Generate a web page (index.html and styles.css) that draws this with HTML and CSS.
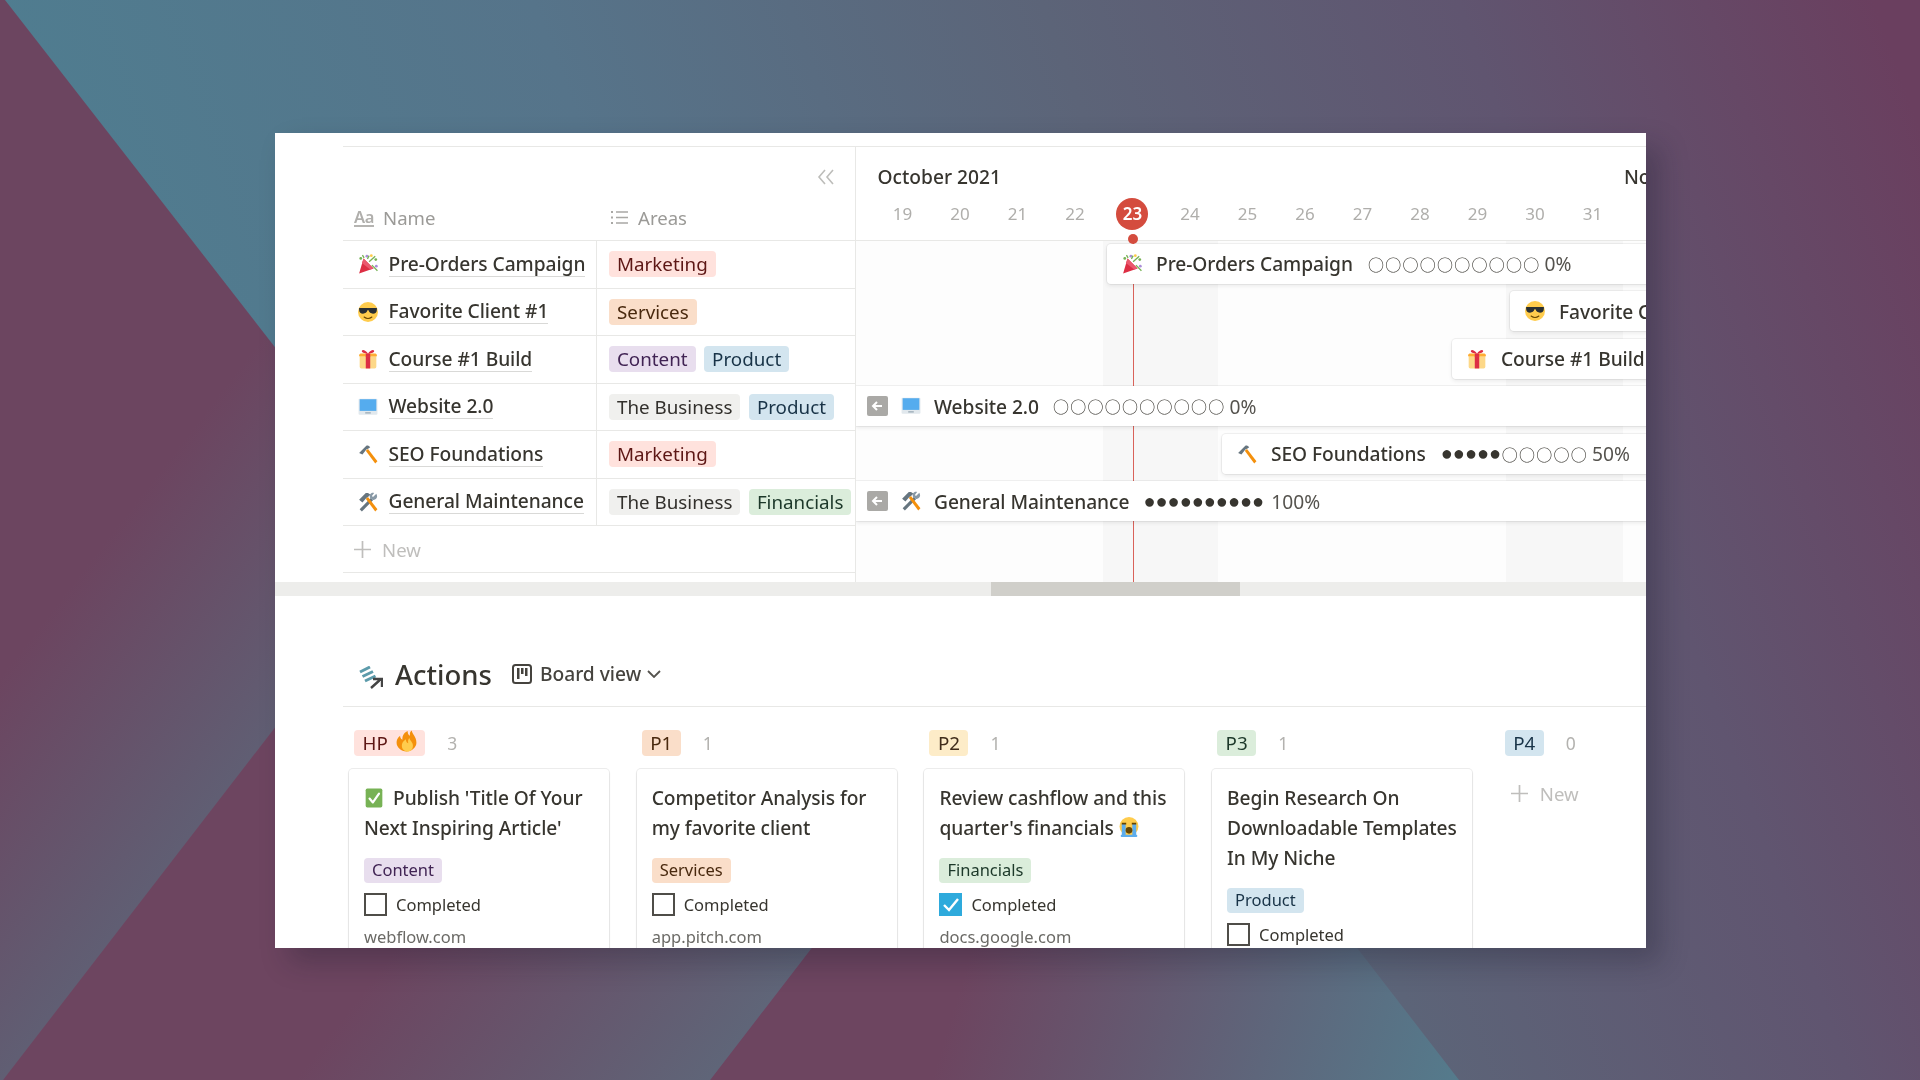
FILE: index.html
```html
<!DOCTYPE html>
<html lang="en">
<head>
<meta charset="utf-8">
<title>Projects timeline and actions board</title>
<link rel="stylesheet" href="styles.css">
</head>
<body>
<svg class="defs" width="0" height="0" aria-hidden="true">
  <symbol id="e-party" viewBox="0 0 36 36">
    <path d="M2 35 10 8 28 26Z" fill="#DD2E44"/><path d="M10 8 28 26 22 28 7 16Z" fill="#EA596E"/>
    <circle cx="16" cy="4" r="2.500" fill="#AA8DD8"/><circle cx="24" cy="3" r="2.500" fill="#FFCC4D"/><circle cx="32" cy="10" r="2.500" fill="#77B255"/><circle cx="5" cy="8" r="2.500" fill="#77B255"/><circle cx="33" cy="22" r="2.500" fill="#AA8DD8"/>
    <path d="M20 14 31 4M25 20 35 30M8 2 11 7M17 9 20 3" stroke="#77B255" stroke-width="2.400" fill="none"/>
  </symbol>
  <symbol id="e-cool" viewBox="0 0 36 36">
    <circle cx="18" cy="18" r="18" fill="#FFCC4D"/>
    <path d="M2 11h32v3c0 5-3 7-7 7s-7-2-8-6h-2c-1 4-4 6-8 6s-7-2-7-7z" fill="#292F33"/>
    <path d="M11 27c4 3 10 3 14 0" stroke="#664500" stroke-width="2" fill="none" stroke-linecap="round"/>
  </symbol>
  <symbol id="e-gift" viewBox="0 0 36 36">
    <rect x="3" y="9" width="30" height="26" rx="3" fill="#FDD888"/>
    <rect x="14" y="9" width="8" height="26" fill="#DD2E44"/>
    <path d="M2 11c0-2 2-3 4-3h24c2 0 4 1 4 3v2H2z" fill="#FFAC33"/>
    <path d="M14 8h8v6h-8z" fill="#DD2E44"/><path d="M18 8C14 2 8 0 7 3s4 5 11 5c7 0 12-2 11-5s-7-1-11 5z" fill="#DD2E44"/>
  </symbol>
  <symbol id="e-pc" viewBox="0 0 36 36">
    <rect x="1" y="3" width="34" height="29" rx="2" fill="#E1E8ED"/>
    <rect x="3" y="4" width="30" height="21" fill="#55ACEE"/>
    <rect x="13" y="27" width="10" height="3" fill="#AAB8C2"/>
  </symbol>
  <symbol id="e-hammer" viewBox="0 0 36 36">
    <path d="M14 12 18 9 35 31 31 35Z" fill="#F4900C"/>
    <path d="M2 16 15 3c2-1 5 0 7 3l-3 2-4 2-7 9Z" fill="#66757F"/>
  </symbol>
  <symbol id="e-tools" viewBox="0 0 36 36">
    <path d="M7 35 3 31 23 11 27 15Z" fill="#66757F"/><path d="M33 3 27 9l-2-2 4-5c-5-2-10 3-7 9l4 3c4 2 10-3 8-8z" fill="#8899A6"/>
    <path d="M14 12 18 9 35 31 31 35Z" fill="#F4900C"/>
    <path d="M2 14 14 2c3-1 6 0 8 3l-3 3-4 3-7 8Z" fill="#66757F"/>
  </symbol>
  <symbol id="e-fire" viewBox="0 0 36 36">
    <path d="M35 21C35 10 28 7 27 0c-2 1-4 4-3 9-3-1-4-4-4-8C11 5 11 12 11 16c-3-1-4-5-4-7C2 13 1 17 1 21c0 8 8 15 17 15s17-7 17-15z" fill="#F4900C"/>
    <path d="M29 26c0-6-5-8-6-13-2 2-3 5-2 9-3-1-4-4-4-7-5 3-7 7-7 11 0 5 4 10 10 10s9-5 9-10z" fill="#FFCC4D"/>
  </symbol>
  <symbol id="e-check" viewBox="0 0 36 36">
    <rect x="3" y="1" width="30" height="34" rx="3" fill="#77B255"/>
    <path d="M10 19 16 26 27 10" stroke="#fff" stroke-width="4" fill="none" stroke-linecap="round" stroke-linejoin="round"/>
  </symbol>
  <symbol id="e-sob" viewBox="0 0 36 36">
    <circle cx="18" cy="17" r="17" fill="#FFCC4D"/>
    <path d="M5 12h7v22H5zM24 12h7v22h-7z" fill="#5DADEC"/>
    <path d="M5 12h8M23 12h8" stroke="#664500" stroke-width="3"/>
    <ellipse cx="18" cy="24" rx="6" ry="6" fill="#664500"/>
    <rect x="3" y="32" width="30" height="4" rx="2" fill="#5DADEC"/>
  </symbol>
</svg>

<div class="stage">
  <div class="shape shape-left"></div>
  <div class="shape shape-band"></div>
  <div class="shape shape-mid"></div>

  <main class="window">
    <section class="gantt">
      <div class="table-panel">
        <div class="panel-head">
          <div class="collapse-row">
            <svg class="collapse" viewBox="0 0 18 16"><path d="M8 1 2 8l6 7M16 1l-6 7 6 7" fill="none" stroke="currentColor" stroke-width="1.6"/></svg>
          </div>
          <div class="head-row">
            <div class="head-name"><span class="aa">Aa</span><span>Name</span></div>
            <div class="head-areas">
              <svg class="list-icon" viewBox="0 0 17 15"><path d="M5 2h12M5 7.500h12M5 13h12" stroke="currentColor" stroke-width="1.6"/><path d="M0 1h2v2H0zM0 6.500h2v2H0zM0 12h2v2H0z" fill="currentColor"/></svg>
              <span>Areas</span>
            </div>
          </div>
        </div>
        <div class="row"><div class="cell-name"><svg class="emo"><use href="#e-party"/></svg><span class="link">Pre-Orders Campaign</span></div><div class="cell-tags"><span class="tag red">Marketing</span></div></div>
        <div class="row"><div class="cell-name"><svg class="emo"><use href="#e-cool"/></svg><span class="link">Favorite Client #1</span></div><div class="cell-tags"><span class="tag orange">Services</span></div></div>
        <div class="row"><div class="cell-name"><svg class="emo"><use href="#e-gift"/></svg><span class="link">Course #1 Build</span></div><div class="cell-tags"><span class="tag purple">Content</span><span class="tag blue">Product</span></div></div>
        <div class="row"><div class="cell-name"><svg class="emo"><use href="#e-pc"/></svg><span class="link">Website 2.0</span></div><div class="cell-tags"><span class="tag gray">The Business</span><span class="tag blue">Product</span></div></div>
        <div class="row"><div class="cell-name"><svg class="emo"><use href="#e-hammer"/></svg><span class="link">SEO Foundations</span></div><div class="cell-tags"><span class="tag red">Marketing</span></div></div>
        <div class="row"><div class="cell-name"><svg class="emo"><use href="#e-tools"/></svg><span class="link">General Maintenance</span></div><div class="cell-tags"><span class="tag gray">The Business</span><span class="tag green">Financials</span></div></div>
        <div class="row-new"><svg class="plus" viewBox="0 0 16 16"><path d="M8 0v16M0 8h16" stroke="currentColor" stroke-width="1.6"/></svg><span>New</span></div>
      </div>

      <div class="timeline">
        <div class="time-head">
          <div class="months"><span>October 2021</span><span class="month-next">November 2021</span></div>
          <div class="days">
            <span class="day">19</span><span class="day">20</span><span class="day">21</span><span class="day">22</span><span class="day today">23</span><span class="day">24</span><span class="day">25</span><span class="day">26</span><span class="day">27</span><span class="day">28</span><span class="day">29</span><span class="day">30</span><span class="day">31</span>
          </div>
        </div>
        <div class="time-body">
          <div class="weekend weekend-a"></div>
          <div class="weekend weekend-b"></div>
          <div class="now-line"></div>
          <div class="now-dot"></div>
          <div class="t-row"><div class="bar at-pre"><svg class="emo"><use href="#e-party"/></svg><span class="bar-name">Pre-Orders Campaign</span><span class="progress"><span class="off">○○○○○○○○○○</span>0%</span></div></div>
          <div class="t-row"><div class="bar at-fav"><svg class="emo"><use href="#e-cool"/></svg><span class="bar-name">Favorite Client #1</span></div></div>
          <div class="t-row"><div class="bar at-course"><svg class="emo"><use href="#e-gift"/></svg><span class="bar-name">Course #1 Build</span></div></div>
          <div class="t-row"><div class="bar bar-full"><span class="back"><svg viewBox="0 0 20 20"><path d="M15 10H6M10 6l-4 4 4 4" fill="none" stroke="#fff" stroke-width="2"/></svg></span><svg class="emo"><use href="#e-pc"/></svg><span class="bar-name">Website 2.0</span><span class="progress"><span class="off">○○○○○○○○○○</span>0%</span></div></div>
          <div class="t-row"><div class="bar at-seo"><svg class="emo"><use href="#e-hammer"/></svg><span class="bar-name">SEO Foundations</span><span class="progress"><span class="on">●●●●●</span><span class="off">○○○○○</span>50%</span></div></div>
          <div class="t-row"><div class="bar bar-full"><span class="back"><svg viewBox="0 0 20 20"><path d="M15 10H6M10 6l-4 4 4 4" fill="none" stroke="#fff" stroke-width="2"/></svg></span><svg class="emo"><use href="#e-tools"/></svg><span class="bar-name">General Maintenance</span><span class="progress"><span class="on">●●●●●●●●●●</span>100%</span></div></div>
        </div>
      </div>
    </section>

    <div class="scrollbar"><div class="thumb"></div></div>

    <section class="actions">
      <header class="actions-head">
        <svg class="actions-icon" viewBox="0 0 25 23"><path d="M2 6 12 1M4.500 10.500 15 5.500M7 15l10.500-5" stroke="#5C9BAB" stroke-width="3" fill="none"/><path d="M13 22 23 13M15 13h9v8" stroke="#444" stroke-width="2.400" fill="none"/></svg>
        <h2 class="actions-title">Actions</h2>
        <svg class="board-icon" viewBox="0 0 20 20"><rect x="1" y="1" width="18" height="18" rx="2.500" fill="none" stroke="currentColor" stroke-width="2"/><path d="M5 4h2.500v11H5zM9 4h2.500v6H9zM13 4h2.500v8H13z" fill="currentColor"/></svg>
        <span class="view-name">Board view</span>
        <svg class="chevron" viewBox="0 0 14 8"><path d="M1 1l6 6 6-6" fill="none" stroke="currentColor" stroke-width="1.800"/></svg>
      </header>

      <div class="board">
        <div class="col">
          <div class="col-head"><span class="group red">HP <svg class="emo-small"><use href="#e-fire"/></svg></span><span class="count">3</span></div>
          <article class="card">
            <h3 class="card-title"><svg class="emo-inline"><use href="#e-check"/></svg>Publish 'Title Of Your Next Inspiring Article'</h3>
            <span class="tag small purple">Content</span>
            <div class="done"><span class="box"></span>Completed</div>
            <span class="url">webflow.com</span>
          </article>
        </div>
        <div class="col">
          <div class="col-head"><span class="group orange">P1</span><span class="count">1</span></div>
          <article class="card">
            <h3 class="card-title">Competitor Analysis for my favorite client</h3>
            <span class="tag small orange">Services</span>
            <div class="done"><span class="box"></span>Completed</div>
            <span class="url">app.pitch.com</span>
          </article>
        </div>
        <div class="col">
          <div class="col-head"><span class="group yellow">P2</span><span class="count">1</span></div>
          <article class="card">
            <h3 class="card-title">Review cashflow and this quarter's financials <svg class="emo-after"><use href="#e-sob"/></svg></h3>
            <span class="tag small green">Financials</span>
            <div class="done"><span class="box checked"><svg viewBox="0 0 23 23"><path d="M5 12l5 5 9-11" fill="none" stroke="#fff" stroke-width="2.400"/></svg></span>Completed</div>
            <span class="url">docs.google.com</span>
          </article>
        </div>
        <div class="col">
          <div class="col-head"><span class="group green">P3</span><span class="count">1</span></div>
          <article class="card">
            <h3 class="card-title">Begin Research On Downloadable Templates In My Niche</h3>
            <span class="tag small blue">Product</span>
            <div class="done"><span class="box"></span>Completed</div>
          </article>
        </div>
        <div class="col">
          <div class="col-head"><span class="group blue">P4</span><span class="count">0</span></div>
          <div class="col-new"><svg class="plus" viewBox="0 0 16 16"><path d="M8 0v16M0 8h16" stroke="currentColor" stroke-width="1.6"/></svg><span>New</span></div>
        </div>
      </div>
    </section>
  </main>
</div>
</body>
</html>
```

FILE: styles.css
```css
* { box-sizing: border-box; }
html, body { margin: 0; padding: 0; }
body { font-family: "Noto Sans", "Open Sans", sans-serif; color: #37352f; }
.defs { position: absolute; }

.stage {
  position: relative;
  width: 1920px;
  height: 1080px;
  overflow: hidden;
  padding: 133px 0 0 275px;
  background: linear-gradient(70deg, #4f7d90 15%, #56748a 40%, #5c6478 62%, #605570 80%, #6a3f5f 98%);
}
.shape { position: absolute; inset: 0; }
.shape-left {
  background: linear-gradient(127.7deg, #6c4560 19%, #605e73 30.3%);
  clip-path: polygon(5px 0, 600px 765px, 3px 1080px, 0 1080px, 0 0);
}
.shape-band {
  background: linear-gradient(127.7deg, #6d4560 41%, #5f6578 56%);
  clip-path: polygon(3px 1080px, 300px 695px, 800px 300px, 1084px 594px, 710px 1080px);
}
.shape-mid {
  background: linear-gradient(106.8deg, #6d4560 56%, #547c8d 80%);
  clip-path: polygon(710px 1080px, 1084px 594px, 1459px 1080px);
}

.window {
  position: relative;
  width: 1371px;
  height: 815px;
  overflow: hidden;
  background: #fff;
  box-shadow: 14px 14px 26px rgba(20, 20, 40, .28);
}

/* gantt */
.gantt {
  display: flex;
  height: 436px;
  margin: 13px 0 0 68px;
  border-top: 1px solid #e8e8e6;
  filter: blur(.35px);
}
.table-panel { width: 512px; flex: none; }
.panel-head {
  height: 94px;
  padding-bottom: 9px;
  border-bottom: 1px solid #e8e8e6;
}
.collapse-row { display: flex; justify-content: flex-end; padding: 22px 20px 0 0; height: 56px; }
.collapse { width: 18px; height: 16px; color: #bdbdba; }
.head-row { display: flex; height: 28px; color: #9b9a97; font-size: 18.600px; align-items: center; }
.head-name { width: 254px; padding-left: 11px; display: flex; align-items: center; gap: 9px; }
.aa { width: 20px; font-size: 16.500px; font-weight: 600; line-height: 17px; border-bottom: 2px solid #b5b4b1; color: #b0afac; letter-spacing: -.4px; text-align: center; }
.head-areas { padding-left: 14px; display: flex; align-items: center; gap: 10px; }
.list-icon { width: 17px; height: 15px; color: #a9a8a5; }

.row {
  display: flex;
  height: 47.500px;
  border-bottom: 1px solid #e8e8e6;
}
.cell-name {
  width: 254px;
  border-right: 1px solid #e8e8e6;
  display: flex;
  align-items: center;
  gap: 10.500px;
  padding-left: 15px;
}
.emo { width: 20px; height: 20px; flex: none; }
.link {
  font-size: 19.200px;
  font-weight: 500;
  line-height: 24px;
  letter-spacing: -.06px;
  white-space: nowrap;
  border-bottom: 1px solid #d9d9d7;
}
.cell-tags { display: flex; align-items: center; gap: 8.500px; padding-left: 12px; }
.tag {
  display: inline-block;
  height: 26px;
  line-height: 26px;
  padding: 0 8px;
  border-radius: 4px;
  font-size: 18.800px;
  white-space: nowrap;
}
.red { background: #ffe2dd; color: #5d1715; }
.orange { background: #fadec9; color: #49290e; }
.yellow { background: #fdecc8; color: #402c1b; }
.green { background: #dbeddb; color: #1c3829; }
.blue { background: #d3e5ef; color: #183347; }
.purple { background: #e8deee; color: #412454; }
.gray { background: #f0f0ee; color: #32302c; }
.row-new {
  height: 47px;
  display: flex;
  align-items: center;
  gap: 11px;
  padding-left: 11px;
  font-size: 18.600px;
  color: #bfbebc;
  border-bottom: 1px solid #e8e8e6;
}
.plus { width: 17px; height: 17px; }

/* timeline */
.timeline { flex: 1; min-width: 0; border-left: 1px solid #e8e8e6; overflow: hidden; }
.time-head { height: 94px; border-bottom: 1px solid #e8e8e6; background: #fff; }
.months {
  display: flex;
  height: 51px;
  align-items: center;
  padding: 7px 0 0 21.500px;
  font-size: 19.200px;
  font-weight: 500;
  white-space: nowrap;
}
.month-next { margin-left: 623px; }
.days { position: relative; z-index: 0; display: flex; padding-left: 17.750px; }
.day {
  position: relative;
  width: 57.500px;
  flex: none;
  height: 32px;
  line-height: 32px;
  text-align: center;
  font-size: 17px;
  color: #afaeab;
}
.today { color: #fff; font-weight: 600; }
.today::before {
  content: "";
  position: absolute;
  left: 12.250px;
  top: 0;
  z-index: -1;
  width: 32px;
  height: 32px;
  border-radius: 50%;
  background: #d44c3e;
}
.time-body { position: relative; height: 341px; background: #fdfdfd; }
.weekend { position: absolute; top: 0; bottom: 0; background: #f7f7f7; }
.weekend-a { left: 247px; width: 115px; }
.weekend-b { left: 650px; width: 117px; }
.now-line { position: absolute; left: 277px; top: 0; bottom: 0; width: 1px; background: #d9625a; }
.now-dot { position: absolute; left: 271.500px; top: -7px; width: 10px; height: 10px; border-radius: 50%; background: #d44c3e; z-index: 2; }
.t-row { position: relative; display: flex; align-items: center; height: 47.500px; }
.bar {
  flex: 1;
  min-width: 0;
  height: 40px;
  margin-bottom: 2px;
  display: flex;
  align-items: center;
  gap: 14px;
  padding-left: 15px;
  margin-right: -8px;
  background: #fff;
  border-radius: 4px;
  box-shadow: 0 0 0 1px rgba(15, 15, 15, .05), 0 2px 4px rgba(15, 15, 15, .08);
  white-space: nowrap;
  overflow: hidden;
}
.at-pre { margin-left: 251px; }
.at-fav { margin-left: 654px; }
.at-course { margin-left: 596px; }
.at-seo { margin-left: 366px; }
.bar-full { gap: 13px; padding-left: 11px; border-radius: 0; }
.back { width: 21px; height: 20px; flex: none; background: #aaa9a6; border-radius: 2px; display: flex; }
.bar-name { font-size: 19.200px; font-weight: 500; letter-spacing: -.06px; }
.progress { margin-left: 1px; font-size: 19.200px; color: #55534e; display: flex; align-items: center; }
.progress .off { font-family: "Noto Sans CJK SC", sans-serif; font-size: 16px; letter-spacing: 1.250px; color: #37352f; margin-right: 4px; }
.progress .on { font-family: "Liberation Sans", sans-serif; font-size: 20px; color: #37352f; margin-right: 7px; }
.progress .on + .off { margin-left: -6.500px; }

/* scrollbar */
.scrollbar { height: 14px; background: #ededeb; }
.thumb { width: 249px; height: 14px; margin-left: 716px; background: #d0cfca; }

/* actions */
.actions { filter: blur(.35px); }
.actions-head {
  height: 111px;
  margin-left: 68px;
  padding: 48px 0 0 15px;
  display: flex;
  align-items: center;
  border-bottom: 1px solid #e8e8e6;
}
.actions-icon { width: 25px; height: 23px; margin: 4px 12px 0 0; flex: none; }
.actions-title { margin: 0 20px 0 0; font-size: 27.500px; font-weight: 500; line-height: 36px; }
.board-icon { width: 20px; height: 20px; margin: 0 8px 3px 0; color: #45433e; }
.view-name { font-size: 19.200px; font-weight: 500; color: #45433e; margin-bottom: 3px; }
.chevron { width: 14px; height: 8px; margin: 0 0 3px 6px; color: #55534e; }

.board { display: flex; gap: 27.700px; padding: 23px 0 0 74px; }
.col { width: 260px; flex: none; }
.col-head { display: flex; align-items: center; gap: 22px; height: 26px; padding-left: 5px; margin-bottom: 13px; }
.group {
  display: inline-flex;
  align-items: center;
  gap: 8px;
  height: 26px;
  padding: 0 8.500px;
  border-radius: 4px;
  font-size: 18.800px;
}
.emo-small { width: 21px; height: 22px; margin-top: -4px; }
.count { font-size: 17.500px; color: #b3b2af; }
.card {
  display: block;
  padding: 14px 5px 20px 15px;
  min-height: 200px;
  border-radius: 4px;
  box-shadow: 0 0 0 1px rgba(15, 15, 15, .08), 0 2px 3px rgba(15, 15, 15, .08);
  margin-top: 1px;
}
.card-title { margin: 0 0 15px; font-size: 19.200px; font-weight: 500; line-height: 30px; letter-spacing: -.06px; }
.emo-inline { width: 20px; height: 20px; margin-right: 9px; vertical-align: -3px; }
.emo-after { width: 20px; height: 22px; vertical-align: -3px; }
.tag.small { height: 25px; line-height: 24px; font-size: 16.500px; display: table; }
.done { display: flex; align-items: center; gap: 9px; height: 23px; margin-top: 10px; font-size: 16.500px; }
.box { width: 23px; height: 23px; border: 2px solid #4f4d48; flex: none; }
.box.checked { border: 0; background: #2eaadc; }
.box svg { display: block; }
.url { display: table; margin-top: 9.500px; font-size: 16.500px; line-height: 22px; color: #6b6a66; border-bottom: 1px solid #d9d9d7; }
.col-new { display: flex; align-items: center; gap: 12px; padding: 12px 0 0 11px; font-size: 18.600px; color: #bfbebc; }
```
